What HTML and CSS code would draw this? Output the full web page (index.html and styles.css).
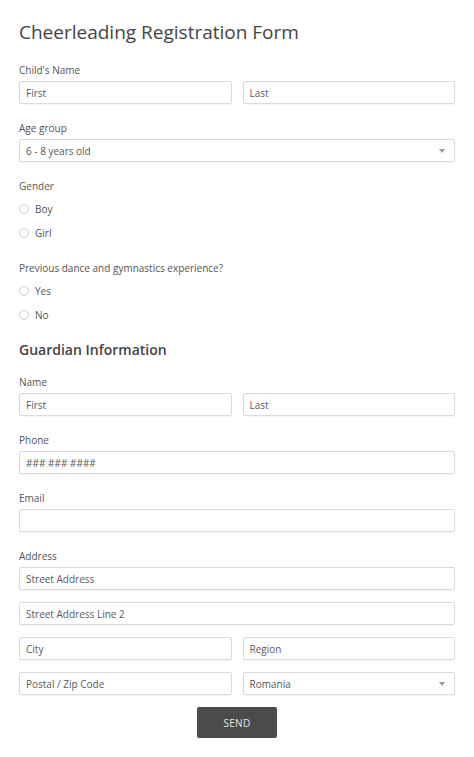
FILE: index.html
```html
<!DOCTYPE html>
<html lang="en">
<head>
  <meta charset="UTF-8" />
  <meta name="viewport" content="width=device-width, initial-scale=1" />
  <title>Cheerleading Registration Form</title>
  <link rel="stylesheet" href="styles.css">
</head>
<body>
  <form class="form">
    <h1 class="form-title">Cheerleading Registration Form</h1>

    <div class="field">
      <label class="field-label">Child's Name</label>
      <div class="row">
        <input type="text" placeholder="First" />
        <input type="text" placeholder="Last" />
      </div>
    </div>

    <div class="field">
      <label class="field-label">Age group</label>
      <div class="select-wrap">
        <select>
          <option>6 - 8 years old</option>
        </select>
      </div>
    </div>

    <div class="field radios">
      <label class="field-label">Gender</label>
      <label class="radio"><span class="dot"></span>Boy</label>
      <label class="radio"><span class="dot"></span>Girl</label>
    </div>

    <div class="field radios">
      <label class="field-label">Previous dance and gymnastics experience?</label>
      <label class="radio"><span class="dot"></span>Yes</label>
      <label class="radio"><span class="dot"></span>No</label>
    </div>

    <h2 class="section-title">Guardian Information</h2>

    <div class="field">
      <label class="field-label">Name</label>
      <div class="row">
        <input type="text" placeholder="First" />
        <input type="text" placeholder="Last" />
      </div>
    </div>

    <div class="field">
      <label class="field-label">Phone</label>
      <input type="text" placeholder="### ### ####" />
    </div>

    <div class="field">
      <label class="field-label">Email</label>
      <input type="email" />
    </div>

    <div class="field address">
      <label class="field-label">Address</label>
      <div class="stack">
        <input type="text" placeholder="Street Address" />
        <input type="text" placeholder="Street Address Line 2" />
        <div class="row">
          <input type="text" placeholder="City" />
          <input type="text" placeholder="Region" />
        </div>
        <div class="row">
          <input type="text" placeholder="Postal / Zip Code" />
          <div class="select-wrap">
            <select>
              <option>Romania</option>
            </select>
          </div>
        </div>
      </div>
    </div>

    <div class="actions">
      <button type="button" class="send">SEND</button>
    </div>
  </form>
</body>
</html>
```

FILE: styles.css
```css
html, body {
  margin: 0; padding: 0;
  background: #fff;
  font-family: "Open Sans", "Noto Sans", sans-serif;
  color: #555;
}
.form {
  width: 436px;
  margin: 0 auto;
  padding: 19px 0 0;
  display: flex;
  flex-direction: column;
}
.form-title {
  margin: 0 0 17px;
  font-size: 19px;
  line-height: 26px;
  font-weight: 400;
  color: #444;
}
.section-title {
  margin: -3px 0 13px;
  font-size: 14px;
  line-height: 22px;
  font-weight: 600;
  color: #444;
}
.field {
  display: flex;
  flex-direction: column;
  margin-bottom: 16px;
}
.field-label {
  font-size: 10px;
  line-height: 16px;
  margin-bottom: 3px;
  color: #555;
}
.row {
  display: grid;
  grid-template-columns: 1fr 1fr;
  gap: 11px;
}
.stack {
  display: flex;
  flex-direction: column;
  gap: 12px;
}
input[type="text"], input[type="email"], select {
  display: block;
  width: 100%;
  height: 23px;
  box-sizing: border-box;
  padding: 0 6px;
  border: 1px solid #dadada;
  border-radius: 2px;
  box-shadow: 0 1px 1px rgba(0,0,0,0.04);
  background: #fff;
  font-family: inherit;
  font-size: 10px;
  color: #555;
  outline: none;
}
input::placeholder {
  color: #5a5a5a;
  opacity: 1;
}
select {
  -webkit-appearance: none;
  appearance: none;
}
.select-wrap {
  position: relative;
}
.select-wrap::after {
  content: "";
  position: absolute;
  right: 10px;
  top: 10px;
  border-left: 3px solid transparent;
  border-right: 3px solid transparent;
  border-top: 4px solid #9a9a9a;
}
.radios {
  margin-bottom: 15px;
}
.radio {
  display: flex;
  align-items: center;
  height: 24px;
  font-size: 10px;
  color: #555;
}
.dot {
  width: 8px;
  height: 8px;
  border: 1px solid #cfcfcf;
  border-radius: 50%;
  margin: 0 6px 0 0;
}
.address {
  margin-bottom: 12px;
}
.actions {
  display: flex;
  justify-content: center;
}
.send {
  width: 80px;
  height: 31px;
  border: none;
  border-radius: 2px;
  background: #4b4b4b;
  color: #e6e6e6;
  font-family: inherit;
  font-size: 10px;
  letter-spacing: 0.3px;
}
```
